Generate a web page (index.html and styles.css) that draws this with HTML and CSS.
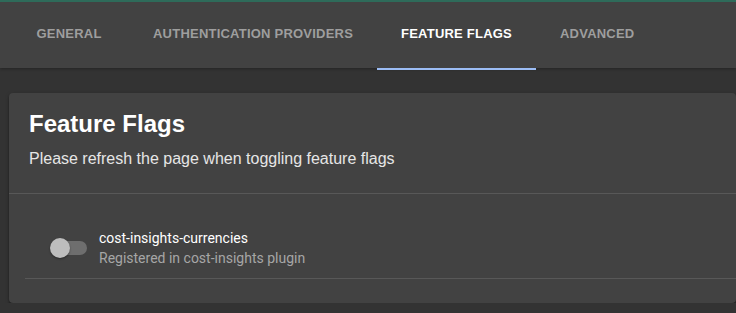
FILE: index.html
```html
<!DOCTYPE html>
<html lang="en">
<head>
  <meta charset="UTF-8" />
  <title>Settings - Feature Flags</title>
  <link rel="stylesheet" href="styles.css">
</head>
<body>

<div class="tab-bar">
  <div class="tab">General</div>
  <div class="tab">Authentication Providers</div>
  <div class="tab active">Feature Flags</div>
  <div class="tab">Advanced</div>
</div>

<div class="content">
  <div class="card">
    <div class="card-header">
      <h2>Feature Flags</h2>
      <p>Please refresh the page when toggling feature flags</p>
    </div>
    <div class="card-body">
      <div class="flag-item">
        <div class="switch">
          <span class="track"></span>
          <span class="thumb"></span>
        </div>
        <div class="flag-text">
          <div class="flag-name">cost-insights-currencies</div>
          <div class="flag-desc">Registered in cost-insights plugin</div>
        </div>
      </div>
    </div>
  </div>
</div>

</body>
</html>
```

FILE: styles.css
```css
body {
  margin: 0;
  background: #333333;
  font-family: 'Liberation Sans', Arial, sans-serif;
  color: #fff;
  overflow: hidden;
}

.tab-bar {
  display: flex;
  height: 66px;
  padding-left: 9px;
  background: #424242;
  border-top: 2px solid #2e6b5a;
  box-shadow: 0 1px 3px rgba(0,0,0,0.3);
}

.tab {
  display: flex;
  align-items: center;
  justify-content: center;
  box-sizing: border-box;
  min-width: 120px;
  padding: 0 24px 3px;
  margin-bottom: -2px;
  font-size: 13px;
  font-weight: bold;
  letter-spacing: 0.22px;
  text-transform: uppercase;
  color: #9e9e9e;
  border-bottom: 2px solid transparent;
}

.tab.active {
  color: #fff;
  border-bottom-color: #9cbdf5;
}

.content {
  padding: 25px 0 0 9px;
}

.card {
  background: #424242;
  border-radius: 4px;
  box-shadow: 0 2px 2px rgba(0,0,0,0.35), 0 1px 4px rgba(0,0,0,0.2);
}

.card-header {
  padding: 15px 20px 22px;
  border-bottom: 1px solid #585858;
}

.card-header h2 {
  margin: 0;
  font-size: 24px;
  line-height: 32px;
  font-weight: bold;
}

.card-header p {
  margin: 7px 0 0;
  font-size: 16px;
  line-height: 24px;
  color: #e6e6e6;
}

.card-body {
  padding: 26px 0 24px 16px;
}

.flag-item {
  display: flex;
  align-items: center;
  padding: 8px 0 10px 25px;
  border-bottom: 1px solid #585858;
}

.switch {
  position: relative;
  width: 37px;
  height: 20px;
  margin-right: 12px;
}

.track {
  position: absolute;
  left: 4px;
  right: 0;
  top: 3px;
  height: 14px;
  border-radius: 7px;
  background: #6e6e6e;
}

.thumb {
  position: absolute;
  left: 0;
  top: 0;
  width: 20px;
  height: 20px;
  border-radius: 50%;
  background: #bdbdbd;
  box-shadow: 0 1px 2px rgba(0,0,0,0.4);
}

.flag-text {
  font-family: Roboto, sans-serif;
  font-size: 14px;
  line-height: 20px;
}

.flag-name {
  color: #fff;
}

.flag-desc {
  color: #a6a6a6;
}
```
